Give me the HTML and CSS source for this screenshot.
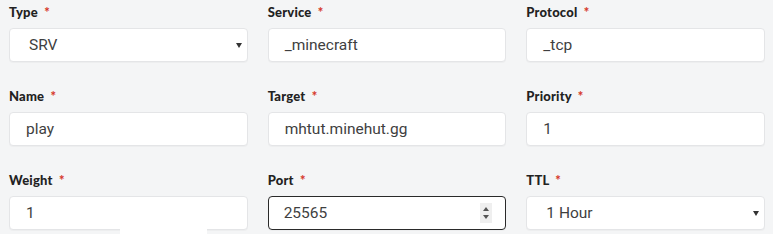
FILE: index.html
```html
<!DOCTYPE html>
<html>
<head>
<meta charset="utf-8">
<link rel="stylesheet" href="styles.css">
</head>
<body>
<div class="grid">
  <div class="field">
    <div class="label">Type <span class="req">*</span></div>
    <div class="box select"><span class="val">SRV</span><span class="caret"></span></div>
  </div>
  <div class="field">
    <div class="label">Service <span class="req">*</span></div>
    <div class="box"><span class="val">_minecraft</span></div>
  </div>
  <div class="field">
    <div class="label">Protocol <span class="req">*</span></div>
    <div class="box"><span class="val">_tcp</span></div>
  </div>
  <div class="field">
    <div class="label">Name <span class="req">*</span></div>
    <div class="box"><span class="val">play</span></div>
  </div>
  <div class="field">
    <div class="label">Target <span class="req">*</span></div>
    <div class="box"><span class="val">mhtut.minehut.gg</span></div>
  </div>
  <div class="field">
    <div class="label">Priority <span class="req">*</span></div>
    <div class="box"><span class="val">1</span></div>
  </div>
  <div class="field">
    <div class="label">Weight <span class="req">*</span></div>
    <div class="box"><span class="val">1</span></div>
  </div>
  <div class="field">
    <div class="label">Port <span class="req">*</span></div>
    <div class="box focus"><span class="val">25565</span><span class="spin"><span class="up"></span><span class="down"></span></span></div>
  </div>
  <div class="field">
    <div class="label">TTL <span class="req">*</span></div>
    <div class="box select"><span class="val">1 Hour</span><span class="caret"></span></div>
  </div>
</div>
<div class="patch"></div>
</body>
</html>
```
FILE: styles.css
```css
html, body {
  margin: 0;
  padding: 0;
  background: #f4f5f6;
  width: 773px;
  height: 234px;
  overflow: hidden;
  position: relative;
}
.grid {
  display: grid;
  grid-template-columns: repeat(3, 1fr);
  column-gap: 20px;
  row-gap: 26px;
  padding: 4px 8px 0 9px;
}
.field {
  display: flex;
  flex-direction: column;
  gap: 8px;
}
.label {
  font-family: Lato, "Liberation Sans", sans-serif;
  font-weight: 900;
  font-size: 13px;
  line-height: 16px;
  height: 16px;
  color: #222;
  letter-spacing: 0.2px;
}
.req {
  color: #d6382c;
  margin-left: 3px;
}
.box {
  height: 34px;
  box-sizing: border-box;
  background: #fff;
  border: 1px solid #e4e5e7;
  border-radius: 4px;
  box-shadow: 0 1px 1px rgba(0,0,0,0.03);
  display: flex;
  align-items: center;
  padding: 0 16px;
  font-family: Roboto, "Open Sans", sans-serif;
  font-size: 15.5px;
  color: #3f3f3f;
}
.box .val { flex: 1; }
.select { padding-left: 19px; padding-right: 5px; }
.caret {
  width: 0;
  height: 0;
  border-left: 3px solid transparent;
  border-right: 3px solid transparent;
  border-top: 5px solid #333;
}
.focus {
  border-color: #2a2a2a;
  padding-left: 15px;
  padding-right: 13px;
}
.spin {
  width: 12px;
  height: 20px;
  background: #efefef;
  display: flex;
  flex-direction: column;
  align-items: center;
  justify-content: center;
  gap: 4px;
}
.spin .up {
  width: 0; height: 0;
  border-left: 3px solid transparent;
  border-right: 3px solid transparent;
  border-bottom: 4px solid #555;
}
.spin .down {
  width: 0; height: 0;
  border-left: 3px solid transparent;
  border-right: 3px solid transparent;
  border-top: 4px solid #555;
}
.patch {
  position: absolute;
  left: 120px;
  top: 229px;
  width: 87px;
  height: 5px;
  background: #fff;
}
```
